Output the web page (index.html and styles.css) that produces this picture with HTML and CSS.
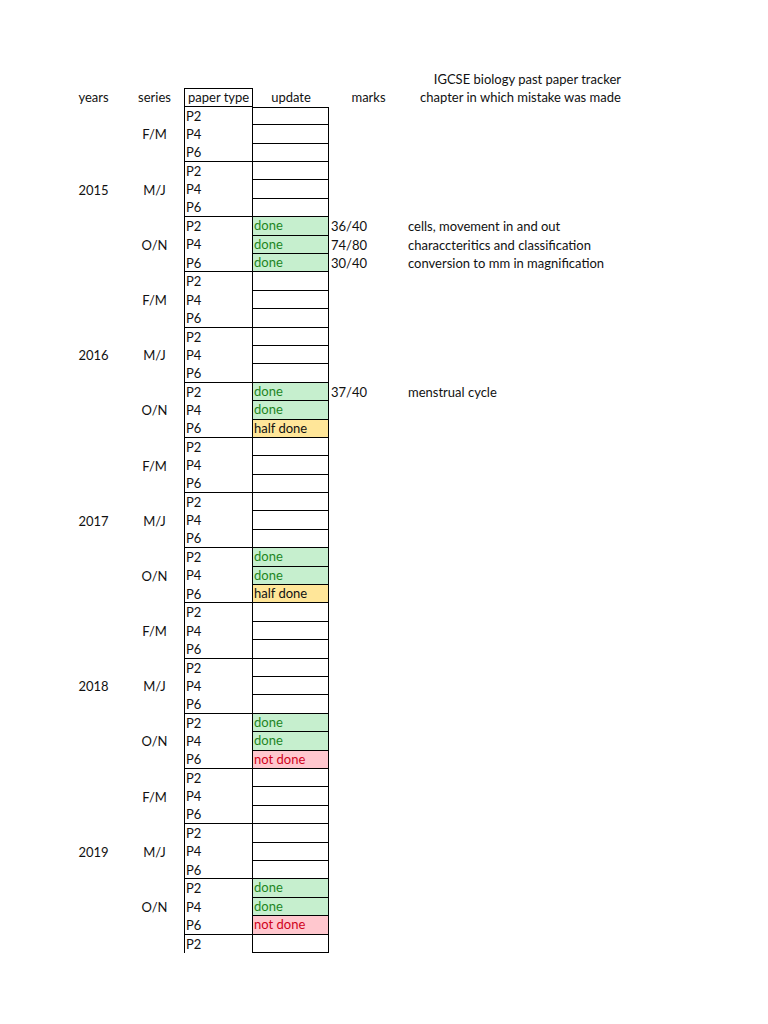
FILE: index.html
```html
<!DOCTYPE html>
<html>
<head>
<meta charset="utf-8">
<link rel="stylesheet" href="styles.css">
</head>
<body>
<div class="sheet">
  <div class="row title-row">
    <div class="c-year"></div><div class="c-series"></div><div class="c-paper"></div><div class="c-update"></div><div class="c-marks"></div>
    <div class="c-chapter title">IGCSE biology past paper tracker</div>
  </div>
  <div class="row head-row">
    <div class="c-year center">years</div>
    <div class="c-series center">series</div>
    <div class="c-paper head-paper">paper type</div>
    <div class="c-update center">update</div>
    <div class="c-marks center">marks</div>
    <div class="c-chapter center">chapter in which mistake was made</div>
  </div>

  <!-- 2015 -->
  <div class="year-block">
    <div class="c-year year-label">2015</div>
    <div class="groups">
      <div class="group">
        <div class="c-series series-label">F/M</div>
        <div class="c-paper paper-box"><div class="pline">P2</div><div class="pline">P4</div><div class="pline">P6</div></div>
        <div class="lines">
          <div class="line"><div class="c-update upd upd-first"></div><div class="c-marks"></div><div class="c-chapter"></div></div>
          <div class="line"><div class="c-update upd"></div><div class="c-marks"></div><div class="c-chapter"></div></div>
          <div class="line"><div class="c-update upd"></div><div class="c-marks"></div><div class="c-chapter"></div></div>
        </div>
      </div>
      <div class="group">
        <div class="c-series series-label">M/J</div>
        <div class="c-paper paper-box"><div class="pline">P2</div><div class="pline">P4</div><div class="pline">P6</div></div>
        <div class="lines">
          <div class="line"><div class="c-update upd"></div><div class="c-marks"></div><div class="c-chapter"></div></div>
          <div class="line"><div class="c-update upd"></div><div class="c-marks"></div><div class="c-chapter"></div></div>
          <div class="line"><div class="c-update upd"></div><div class="c-marks"></div><div class="c-chapter"></div></div>
        </div>
      </div>
      <div class="group">
        <div class="c-series series-label">O/N</div>
        <div class="c-paper paper-box"><div class="pline">P2</div><div class="pline">P4</div><div class="pline">P6</div></div>
        <div class="lines">
          <div class="line"><div class="c-update upd done">done</div><div class="c-marks">36/40</div><div class="c-chapter">cells, movement in and out</div></div>
          <div class="line"><div class="c-update upd done">done</div><div class="c-marks">74/80</div><div class="c-chapter">characcteritics and classification</div></div>
          <div class="line"><div class="c-update upd done">done</div><div class="c-marks">30/40</div><div class="c-chapter">conversion to mm in magnification</div></div>
        </div>
      </div>
    </div>
  </div>

  <!-- 2016 -->
  <div class="year-block">
    <div class="c-year year-label">2016</div>
    <div class="groups">
      <div class="group">
        <div class="c-series series-label">F/M</div>
        <div class="c-paper paper-box"><div class="pline">P2</div><div class="pline">P4</div><div class="pline">P6</div></div>
        <div class="lines">
          <div class="line"><div class="c-update upd"></div><div class="c-marks"></div><div class="c-chapter"></div></div>
          <div class="line"><div class="c-update upd"></div><div class="c-marks"></div><div class="c-chapter"></div></div>
          <div class="line"><div class="c-update upd"></div><div class="c-marks"></div><div class="c-chapter"></div></div>
        </div>
      </div>
      <div class="group">
        <div class="c-series series-label">M/J</div>
        <div class="c-paper paper-box"><div class="pline">P2</div><div class="pline">P4</div><div class="pline">P6</div></div>
        <div class="lines">
          <div class="line"><div class="c-update upd"></div><div class="c-marks"></div><div class="c-chapter"></div></div>
          <div class="line"><div class="c-update upd"></div><div class="c-marks"></div><div class="c-chapter"></div></div>
          <div class="line"><div class="c-update upd"></div><div class="c-marks"></div><div class="c-chapter"></div></div>
        </div>
      </div>
      <div class="group">
        <div class="c-series series-label">O/N</div>
        <div class="c-paper paper-box"><div class="pline">P2</div><div class="pline">P4</div><div class="pline">P6</div></div>
        <div class="lines">
          <div class="line"><div class="c-update upd done">done</div><div class="c-marks">37/40</div><div class="c-chapter">menstrual cycle</div></div>
          <div class="line"><div class="c-update upd done">done</div><div class="c-marks"></div><div class="c-chapter"></div></div>
          <div class="line"><div class="c-update upd half">half done</div><div class="c-marks"></div><div class="c-chapter"></div></div>
        </div>
      </div>
    </div>
  </div>

  <!-- 2017 -->
  <div class="year-block">
    <div class="c-year year-label">2017</div>
    <div class="groups">
      <div class="group">
        <div class="c-series series-label">F/M</div>
        <div class="c-paper paper-box"><div class="pline">P2</div><div class="pline">P4</div><div class="pline">P6</div></div>
        <div class="lines">
          <div class="line"><div class="c-update upd"></div><div class="c-marks"></div><div class="c-chapter"></div></div>
          <div class="line"><div class="c-update upd"></div><div class="c-marks"></div><div class="c-chapter"></div></div>
          <div class="line"><div class="c-update upd"></div><div class="c-marks"></div><div class="c-chapter"></div></div>
        </div>
      </div>
      <div class="group">
        <div class="c-series series-label">M/J</div>
        <div class="c-paper paper-box"><div class="pline">P2</div><div class="pline">P4</div><div class="pline">P6</div></div>
        <div class="lines">
          <div class="line"><div class="c-update upd"></div><div class="c-marks"></div><div class="c-chapter"></div></div>
          <div class="line"><div class="c-update upd"></div><div class="c-marks"></div><div class="c-chapter"></div></div>
          <div class="line"><div class="c-update upd"></div><div class="c-marks"></div><div class="c-chapter"></div></div>
        </div>
      </div>
      <div class="group">
        <div class="c-series series-label">O/N</div>
        <div class="c-paper paper-box"><div class="pline">P2</div><div class="pline">P4</div><div class="pline">P6</div></div>
        <div class="lines">
          <div class="line"><div class="c-update upd done">done</div><div class="c-marks"></div><div class="c-chapter"></div></div>
          <div class="line"><div class="c-update upd done">done</div><div class="c-marks"></div><div class="c-chapter"></div></div>
          <div class="line"><div class="c-update upd half">half done</div><div class="c-marks"></div><div class="c-chapter"></div></div>
        </div>
      </div>
    </div>
  </div>

  <!-- 2018 -->
  <div class="year-block">
    <div class="c-year year-label">2018</div>
    <div class="groups">
      <div class="group">
        <div class="c-series series-label">F/M</div>
        <div class="c-paper paper-box"><div class="pline">P2</div><div class="pline">P4</div><div class="pline">P6</div></div>
        <div class="lines">
          <div class="line"><div class="c-update upd"></div><div class="c-marks"></div><div class="c-chapter"></div></div>
          <div class="line"><div class="c-update upd"></div><div class="c-marks"></div><div class="c-chapter"></div></div>
          <div class="line"><div class="c-update upd"></div><div class="c-marks"></div><div class="c-chapter"></div></div>
        </div>
      </div>
      <div class="group">
        <div class="c-series series-label">M/J</div>
        <div class="c-paper paper-box"><div class="pline">P2</div><div class="pline">P4</div><div class="pline">P6</div></div>
        <div class="lines">
          <div class="line"><div class="c-update upd"></div><div class="c-marks"></div><div class="c-chapter"></div></div>
          <div class="line"><div class="c-update upd"></div><div class="c-marks"></div><div class="c-chapter"></div></div>
          <div class="line"><div class="c-update upd"></div><div class="c-marks"></div><div class="c-chapter"></div></div>
        </div>
      </div>
      <div class="group">
        <div class="c-series series-label">O/N</div>
        <div class="c-paper paper-box"><div class="pline">P2</div><div class="pline">P4</div><div class="pline">P6</div></div>
        <div class="lines">
          <div class="line"><div class="c-update upd done">done</div><div class="c-marks"></div><div class="c-chapter"></div></div>
          <div class="line"><div class="c-update upd done">done</div><div class="c-marks"></div><div class="c-chapter"></div></div>
          <div class="line"><div class="c-update upd notdone">not done</div><div class="c-marks"></div><div class="c-chapter"></div></div>
        </div>
      </div>
    </div>
  </div>

  <!-- 2019 -->
  <div class="year-block">
    <div class="c-year year-label">2019</div>
    <div class="groups">
      <div class="group">
        <div class="c-series series-label">F/M</div>
        <div class="c-paper paper-box"><div class="pline">P2</div><div class="pline">P4</div><div class="pline">P6</div></div>
        <div class="lines">
          <div class="line"><div class="c-update upd"></div><div class="c-marks"></div><div class="c-chapter"></div></div>
          <div class="line"><div class="c-update upd"></div><div class="c-marks"></div><div class="c-chapter"></div></div>
          <div class="line"><div class="c-update upd"></div><div class="c-marks"></div><div class="c-chapter"></div></div>
        </div>
      </div>
      <div class="group">
        <div class="c-series series-label">M/J</div>
        <div class="c-paper paper-box"><div class="pline">P2</div><div class="pline">P4</div><div class="pline">P6</div></div>
        <div class="lines">
          <div class="line"><div class="c-update upd"></div><div class="c-marks"></div><div class="c-chapter"></div></div>
          <div class="line"><div class="c-update upd"></div><div class="c-marks"></div><div class="c-chapter"></div></div>
          <div class="line"><div class="c-update upd"></div><div class="c-marks"></div><div class="c-chapter"></div></div>
        </div>
      </div>
      <div class="group">
        <div class="c-series series-label">O/N</div>
        <div class="c-paper paper-box"><div class="pline">P2</div><div class="pline">P4</div><div class="pline">P6</div></div>
        <div class="lines">
          <div class="line"><div class="c-update upd done">done</div><div class="c-marks"></div><div class="c-chapter"></div></div>
          <div class="line"><div class="c-update upd done">done</div><div class="c-marks"></div><div class="c-chapter"></div></div>
          <div class="line"><div class="c-update upd notdone">not done</div><div class="c-marks"></div><div class="c-chapter"></div></div>
        </div>
      </div>
    </div>
  </div>

  <!-- 2020 partial -->
  <div class="row last-row">
    <div class="c-year"></div>
    <div class="c-series"></div>
    <div class="c-paper paper-last"><div class="pline">P2</div></div>
    <div class="c-update upd"></div>
    <div class="c-marks"></div>
    <div class="c-chapter"></div>
  </div>
</div>
</body>
</html>
```

FILE: styles.css
```css
* { box-sizing: border-box; }

html, body {
  margin: 0;
  padding: 0;
  background: #ffffff;
}

body {
  font-family: Lato, "Liberation Sans", sans-serif;
  font-size: 13px;
  color: #111111;
}

.sheet {
  padding: 70px 0 0 62px;
}

.row, .line {
  display: flex;
  height: 18.4px;
  line-height: 18px;
}

.c-year { width: 63px; flex: none; }
.c-series { width: 59px; flex: none; }
.c-paper { width: 69px; flex: none; }
.c-update { width: 76px; flex: none; }
.c-marks { width: 79px; flex: none; padding-left: 2px; }
.c-chapter { width: 225px; flex: none; }

.center { text-align: center; }

.title {
  text-align: right;
  padding-right: 12px;
}

.head-paper {
  border: 1px solid #000;
  padding-left: 3px;
  line-height: 16px;
}

.head-row .c-marks { padding-left: 0; }

.year-block {
  display: flex;
}

.year-label {
  display: flex;
  align-items: center;
  justify-content: center;
}

.groups {
  display: flex;
  flex-direction: column;
}

.group {
  display: flex;
  height: 55.2px;
}

.series-label {
  display: flex;
  align-items: center;
  justify-content: center;
}

.paper-box {
  border-left: 1px solid #000;
  border-right: 1px solid #000;
  border-bottom: 1px solid #000;
  padding-left: 1px;
}

.pline {
  height: 18.2px;
  line-height: 18px;
}

.paper-last {
  border-left: 1px solid #000;
  border-right: 1px solid #000;
  padding-left: 1px;
}

.lines {
  display: flex;
  flex-direction: column;
}

.upd {
  border-right: 1px solid #000;
  border-bottom: 1px solid #000;
  padding-left: 1px;
  line-height: 17px;
}

.upd-first {
  border-top: 1px solid #000;
  line-height: 16px;
}

.done {
  background: #c6efce;
  color: #1e861e;
}

.half {
  background: #ffe699;
  color: #111111;
}

.notdone {
  background: #ffc7ce;
  color: #d0021b;
}
```
